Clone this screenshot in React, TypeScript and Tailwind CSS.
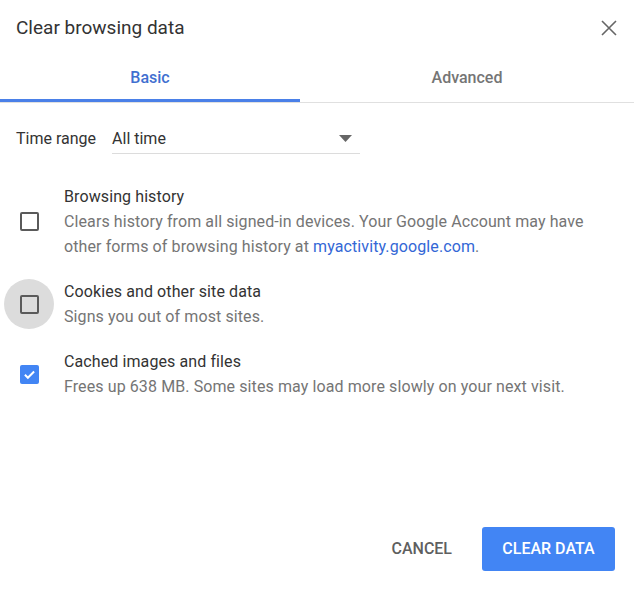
import { useState } from "react"

const font = { fontFamily: "Roboto, 'Liberation Sans', sans-serif" }

interface ItemProps {
  title: string
  checked: boolean
  hovered?: boolean
  children: React.ReactNode
}

function CheckItem({ title, checked, hovered, children }: ItemProps) {
  return (
    <div className="flex items-center">
      <div className="relative ml-[5px] flex h-[48px] w-[48px] shrink-0 items-center justify-center">
        {hovered && (
          <div className="absolute left-[-1px] top-[-1px] h-[50px] w-[50px] rounded-full bg-[#dcdcdc]" />
        )}
        {checked ? (
          <div className="relative flex h-[19px] w-[19px] items-center justify-center rounded-[2px] bg-[#4285f4]">
            <svg width="13" height="13" viewBox="0 0 24 24">
              <path d="M3.5 12.5l5.5 5.5L20.5 6.5" fill="none" stroke="#fff" strokeWidth="3.6" />
            </svg>
          </div>
        ) : (
          <div className="relative h-[19px] w-[19px] rounded-[2px] border-[2.5px] border-[#5a5a5a]" />
        )}
      </div>
      <div className="ml-[11px] text-[16px] leading-[25px] tracking-[0.1px]">
        <div className="text-[#333333]">{title}</div>
        <div className="text-[#757575]">{children}</div>
      </div>
    </div>
  )
}

export default function App() {
  const [tab, setTab] = useState("basic")

  return (
    <div className="flex h-[590px] w-[634px] flex-col bg-white" style={font}>
      <div className="flex items-center justify-between pl-4 pr-[17px] pt-4">
        <h1 className="text-[19px] leading-[24px] text-[#333333]">Clear browsing data</h1>
        <button className="text-[#666666]">
          <svg width="16" height="16" viewBox="0 0 16 16">
            <path d="M1 1L15 15M15 1L1 15" stroke="currentColor" strokeWidth="1.6" />
          </svg>
        </button>
      </div>

      <div className="mt-3 flex border-b border-[#e0e0e0]">
        <button
          onClick={() => setTab("basic")}
          className={`h-[50px] w-[300px] pt-[2px] text-[16px] font-medium ${
            tab === "basic" ? "border-b-[3px] border-[#4a80e8] pt-[4px] text-[#3f6fd0]" : "text-[#757575]"
          }`}
        >
          Basic
        </button>
        <button
          onClick={() => setTab("advanced")}
          className={`h-[50px] flex-1 pt-[2px] text-[16px] font-medium ${
            tab === "advanced" ? "border-b-[3px] border-[#4a80e8] pt-[4px] text-[#3f6fd0]" : "text-[#757575]"
          }`}
        >
          Advanced
        </button>
      </div>

      <div className="mt-[21px] flex items-center pl-4 text-[16px] text-[#333333]">
        <span>Time range</span>
        <div className="ml-4 flex h-[30px] w-[248px] items-center justify-between border-b border-[#dcdcdc] pr-[8px]">
          <span>All time</span>
          <svg width="13" height="7" viewBox="0 0 13 7">
            <path d="M0 0h13L6.5 7z" fill="#666666" />
          </svg>
        </div>
      </div>

      <div className="mt-[30px] flex flex-col gap-5">
        <CheckItem title="Browsing history" checked={false}>
          Clears history from all signed-in devices. Your Google Account may have
          <br />
          other forms of browsing history at <span className="text-[#3367d6]">myactivity.google.com</span>.
        </CheckItem>
        <CheckItem title="Cookies and other site data" checked={false} hovered>
          Signs you out of most sites.
        </CheckItem>
        <CheckItem title="Cached images and files" checked>
          Frees up 638 MB. Some sites may load more slowly on your next visit.
        </CheckItem>
      </div>

      <div className="mt-auto flex items-center justify-end gap-[14px] pb-[19px] pr-[19px]">
        <button className="h-[44px] px-4 text-[16px] font-medium text-[#5f5f5f]">CANCEL</button>
        <button className="h-[44px] w-[133px] rounded-[3px] bg-[#4285f4] text-[16px] font-medium text-white">
          CLEAR DATA
        </button>
      </div>
    </div>
  )
}
